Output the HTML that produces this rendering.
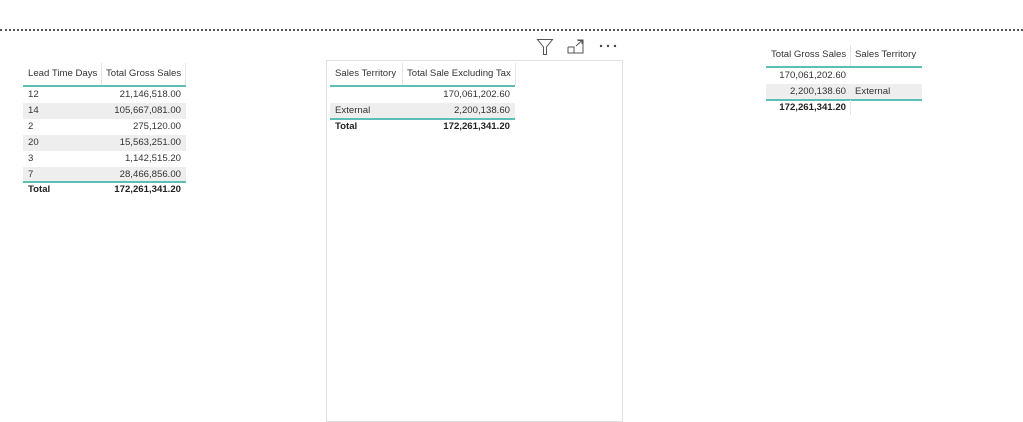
<!DOCTYPE html>
<html><head><meta charset="utf-8"><style>
body{margin:0;width:1023px;height:412px;background:#fff;position:relative;overflow:hidden;font-family:"Liberation Sans",sans-serif;font-size:9.6px;color:#333}
.a{position:absolute;white-space:nowrap}
.r{text-align:right}
.dot{position:absolute;left:0;top:29px;width:1023px;height:0;border-top:2px dotted #555}
.row{position:absolute;height:16px}
.alt{background:#eeeeee}
.teal{position:absolute;height:2px;background:#5bbfb5}
.vl{position:absolute;width:1px;background:#e6e6e6}
.b{font-weight:bold;color:#222}
</style></head><body>
<div class="dot"></div>
<svg class="a" style="left:536px;top:38px" width="18" height="18" viewBox="0 0 18 18"><path d="M1.5 1.5H16.5L10.5 9V16.5H7.5V9Z" fill="none" stroke="#555" stroke-width="1"/></svg>
<svg class="a" style="left:567px;top:39px" width="18" height="16" viewBox="0 0 18 16"><path d="M10 1H16V14H1V8" fill="none" stroke="#555"/><path d="M1 8H7V14" fill="none" stroke="#555"/><path d="M9 7L15 1.5M11 1.5H15V5" fill="none" stroke="#555"/></svg>
<svg class="a" style="left:599px;top:44px" width="18" height="4" viewBox="0 0 18 4"><circle cx="2" cy="2" r="1.2" fill="#444"/><circle cx="9" cy="2" r="1.2" fill="#444"/><circle cx="16" cy="2" r="1.2" fill="#444"/></svg>

<div class="vl" style="left:101px;top:63px;height:22px"></div>
<div class="vl" style="left:185px;top:63px;height:22px"></div>
<div class="a" style="left:28px;top:68px">Lead Time Days</div>
<div class="a" style="left:106px;top:68px">Total Gross Sales</div>
<div class="teal" style="left:23px;top:85px;width:163px"></div>
<div class="row alt" style="left:23px;top:103px;width:163px"></div>
<div class="row alt" style="left:23px;top:135px;width:163px"></div>
<div class="row alt" style="left:23px;top:167px;width:163px"></div>
<div class="teal" style="left:23px;top:181px;width:163px"></div>
<div class="a" style="left:28px;top:89px">12</div><div class="a r" style="left:100px;width:81px;top:89px">21,146,518.00</div>
<div class="a" style="left:28px;top:105px">14</div><div class="a r" style="left:100px;width:81px;top:105px">105,667,081.00</div>
<div class="a" style="left:28px;top:121px">2</div><div class="a r" style="left:100px;width:81px;top:121px">275,120.00</div>
<div class="a" style="left:28px;top:137px">20</div><div class="a r" style="left:100px;width:81px;top:137px">15,563,251.00</div>
<div class="a" style="left:28px;top:153px">3</div><div class="a r" style="left:100px;width:81px;top:153px">1,142,515.20</div>
<div class="a" style="left:28px;top:169px">7</div><div class="a r" style="left:100px;width:81px;top:169px">28,466,856.00</div>
<div class="a b" style="left:28px;top:184px">Total</div><div class="a r b" style="left:100px;width:81px;top:184px">172,261,341.20</div>

<div class="a" style="left:326px;top:60px;width:295px;height:360px;border:1px solid #e0e0e0"></div>
<div class="vl" style="left:402px;top:63px;height:22px"></div>
<div class="vl" style="left:515px;top:63px;height:22px"></div>
<div class="a" style="left:335px;top:68px">Sales Territory</div>
<div class="a" style="left:407px;top:68px">Total Sale Excluding Tax</div>
<div class="teal" style="left:330px;top:85px;width:185px"></div>
<div class="row alt" style="left:330px;top:103px;width:185px"></div>
<div class="teal" style="left:330px;top:118px;width:185px"></div>
<div class="a r" style="left:400px;width:110px;top:89px">170,061,202.60</div>
<div class="a" style="left:335px;top:105px">External</div><div class="a r" style="left:400px;width:110px;top:105px">2,200,138.60</div>
<div class="a b" style="left:335px;top:121px">Total</div><div class="a r b" style="left:400px;width:110px;top:121px">172,261,341.20</div>

<div class="vl" style="left:850px;top:45px;height:22px"></div>
<div class="a" style="left:771px;top:49px">Total Gross Sales</div>
<div class="a" style="left:855px;top:49px">Sales Territory</div>
<div class="teal" style="left:766px;top:66px;width:156px"></div>
<div class="row alt" style="left:766px;top:84px;width:156px"></div>
<div class="teal" style="left:766px;top:99px;width:156px"></div>
<div class="vl" style="left:850px;top:100px;height:15px"></div>
<div class="a r" style="left:766px;width:80px;top:70px">170,061,202.60</div>
<div class="a r" style="left:766px;width:80px;top:86px">2,200,138.60</div><div class="a" style="left:855px;top:86px">External</div>
<div class="a r b" style="left:766px;width:80px;top:102px">172,261,341.20</div>
</body></html>
